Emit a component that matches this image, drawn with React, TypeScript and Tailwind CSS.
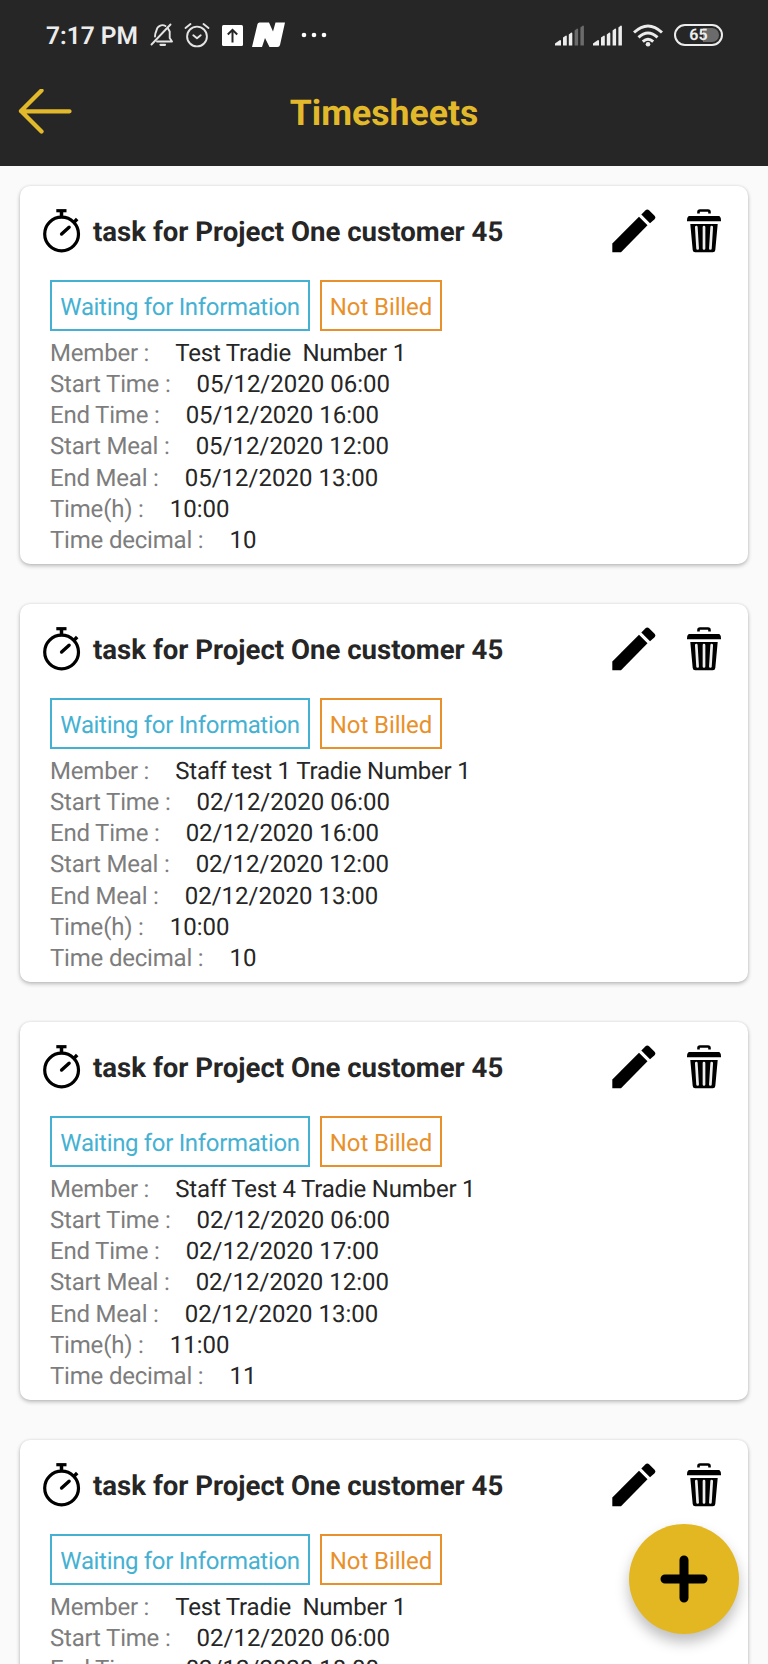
interface Timesheet {
    id: number;
    title: string;
    status: string;
    billing: string;
    member: string;
    startTime: string;
    endTime: string;
    startMeal: string;
    endMeal: string;
    hours: string;
    decimal: string;
}

const timesheets: Timesheet[] = [
    {
        id: 1,
        title: "task for Project One customer 45",
        status: "Waiting for Information",
        billing: "Not Billed",
        member: "Test Tradie  Number 1",
        startTime: "05/12/2020 06:00",
        endTime: "05/12/2020 16:00",
        startMeal: "05/12/2020 12:00",
        endMeal: "05/12/2020 13:00",
        hours: "10:00",
        decimal: "10",
    },
    {
        id: 2,
        title: "task for Project One customer 45",
        status: "Waiting for Information",
        billing: "Not Billed",
        member: "Staff test 1 Tradie Number 1",
        startTime: "02/12/2020 06:00",
        endTime: "02/12/2020 16:00",
        startMeal: "02/12/2020 12:00",
        endMeal: "02/12/2020 13:00",
        hours: "10:00",
        decimal: "10",
    },
    {
        id: 3,
        title: "task for Project One customer 45",
        status: "Waiting for Information",
        billing: "Not Billed",
        member: "Staff Test 4 Tradie Number 1",
        startTime: "02/12/2020 06:00",
        endTime: "02/12/2020 17:00",
        startMeal: "02/12/2020 12:00",
        endMeal: "02/12/2020 13:00",
        hours: "11:00",
        decimal: "11",
    },
    {
        id: 4,
        title: "task for Project One customer 45",
        status: "Waiting for Information",
        billing: "Not Billed",
        member: "Test Tradie  Number 1",
        startTime: "02/12/2020 06:00",
        endTime: "02/12/2020 18:00",
        startMeal: "02/12/2020 12:00",
        endMeal: "02/12/2020 13:00",
        hours: "12:00",
        decimal: "12",
    },
];

function SignalIcon({ level }: { level: number }) {
    const bars = [
        "M0 20.5v-2l5-3.5q1 0 1 1v4.5z",
        "M8 20.5v-8l3-2q.8 0 .8 1v9z",
        "M13.800 20.500v-11l2.500-2q1 0 1 1v12z",
        "M19.600 20.500v-15l2.500-2q1 0 1 1v16z",
        "M25.400 20.500v-18l2.500-2q1 0 1 1v19z",
    ];
    return (
        <svg width="30" height="21" viewBox="0 0 30 21">
            {bars.map((d, i) => (
                <path key={i} d={d} fill={i < level ? "#ececec" : "#6b6b6b"} />
            ))}
        </svg>
    );
}

function StatusBar() {
    return (
        <div className="flex h-[70px] items-center justify-between pl-[46px] pr-[45px]">
            <div className="flex items-center">
                <span className="w-[104px] whitespace-nowrap pt-px text-[24.5px] font-semibold leading-[28px] text-[#ececec]">7:17 PM</span>
                {/* muted bell */}
                <svg width="24" height="24" viewBox="0 0 24 24" fill="none" stroke="#e4e4e4" strokeWidth="1.900" strokeLinecap="round" strokeLinejoin="round">
                    <path d="M7 18.500h15l-2.300-3.500V8.500L18 5.500M15.500 3A6 6 0 0 0 6.500 7.500q-1.500 3-1.500 6" />
                    <path d="M1.500 21.500 20.500 1.500" />
                    <path d="M10.500 21.800h4.500" strokeWidth="2.200" />
                </svg>
                {/* alarm */}
                <svg className="ml-[10px]" width="26" height="26" viewBox="0 0 26 26" fill="none" stroke="#e4e4e4" strokeWidth="1.900" strokeLinecap="round" strokeLinejoin="round">
                    <circle cx="13" cy="14.500" r="9.900" />
                    <path d="m9.300 13.300 3.700 3 3.700-3M1.500 6 6.500 2M24.500 6l-5-4" />
                </svg>
                {/* upload */}
                <svg className="ml-[12px]" width="21" height="21" viewBox="0 0 21 21">
                    <rect width="21" height="21" rx="1.500" fill="#fff" />
                    <path d="M10.500 17.500V5M5.800 9.500l4.700-4.700 4.700 4.700" fill="none" stroke="#262626" strokeWidth="2" />
                </svg>
                {/* news app mark */}
                <svg className="ml-[9px]" width="33" height="26" viewBox="0 0 33 26">
                    <path d="M7.500.5h9.500l4 9 2.500-9H33l-5 22.500q-.5 2-2.500 2h-8l-4.500-9-3 9H0L5.500 2q.5-1.500 2-1.500z" fill="#fff" />
                </svg>
                <svg className="ml-[16px]" width="26" height="6" viewBox="0 0 26 6" fill="#fff">
                    <circle cx="3" cy="3" r="2.300" />
                    <circle cx="13" cy="3" r="2.300" />
                    <circle cx="23" cy="3" r="2.300" />
                </svg>
            </div>
            <div className="flex items-center">
                <SignalIcon level={3} />
                <div className="ml-[8px] flex">
                    <SignalIcon level={5} />
                </div>
                <svg className="ml-[10px]" width="30" height="23" viewBox="0 0 30 23" fill="none" stroke="#ececec" strokeWidth="3">
                    <path d="M1 8.500Q15-4.500 29 8.500M5.500 13.300q9.500-8.600 19 0M9.800 17.600q5.200-4.600 10.400 0" />
                    <circle cx="15" cy="20.300" r="2.300" fill="#ececec" stroke="none" />
                </svg>
                <div className="ml-[11px] flex h-[22px] w-[49px] items-center rounded-full border-2 border-[#ececec] p-[2px]">
                    <div className="flex h-[14px] w-full items-center justify-center rounded-full bg-linear-to-r from-transparent from-60% to-[#6b6b6b] to-60% text-[16px] font-bold leading-none text-[#ececec]">
                        65
                    </div>
                </div>
            </div>
        </div>
    );
}

function Header() {
    return (
        <header className="h-[166px] bg-[#262626]">
            <StatusBar />
            <div className="grid h-[84px] grid-cols-[1fr_auto_1fr] items-center">
                <button className="pl-[18px]" aria-label="Back">
                    <svg width="54" height="46" viewBox="0 0 54 46" fill="none" stroke="#e3b92c" strokeWidth="4.300" strokeLinecap="round" strokeLinejoin="round">
                        <path d="M23.500 1.500 3 22l20.500 20.500M3 22.300h48.500" />
                    </svg>
                </button>
                <h1 className="pt-[2px] text-[35.6px] font-bold leading-[42px] text-[#e3b92c]">Timesheets</h1>
            </div>
        </header>
    );
}

function StopwatchIcon() {
    return (
        <svg width="38" height="45" viewBox="0 0 38 45" fill="none" stroke="#000">
            <circle cx="18.600" cy="26" r="16.900" strokeWidth="3.200" />
            <path d="M13.300 2.700h10.200" strokeWidth="3.200" />
            <path d="M18.500 3v7" strokeWidth="3.500" />
            <path d="m30 15.200 4.200-4.200" strokeWidth="3.500" />
            <path d="m18.600 26 7.500-6.800" strokeWidth="3.400" strokeLinecap="round" />
        </svg>
    );
}

function PencilIcon() {
    return (
        <svg width="44" height="45" viewBox="0 -1 44 45" fill="#000">
            <path d="M.3 34.500 27 7.800l8.500 8.500L9 43.300H.3z" />
            <path d="m29.300 5.500 4-4q2-2 4 0l5 5q2 2 0 4l-4.300 3.800z" />
        </svg>
    );
}

function TrashIcon() {
    return (
        <svg width="34" height="45" viewBox="0 -1 34 45">
            <path d="M11.500 4.500V3q0-1.500 1.500-1.500h8q1.500 0 1.500 1.500v1.500" fill="none" stroke="#000" strokeWidth="2.600" />
            <path d="M2.500 7h29q2.500 0 2.500 4.500v.8H0v-.8Q0 7 2.500 7z" />
            <path d="M3.300 15h27.400l-2.400 26q-.2 2.300-2.500 2.300H8.200q-2.300 0-2.500-2.300z" />
            <path d="m9.300 18 1.300 21.500M17 18v21.500M24.700 18l-1.300 21.500" fill="none" stroke="#eee" strokeWidth="2.700" strokeLinecap="round" />
        </svg>
    );
}

function TimesheetCard({ sheet }: { sheet: Timesheet }) {
    const rows = [
        ["Start Time :", sheet.startTime],
        ["End Time :", sheet.endTime],
        ["Start Meal :", sheet.startMeal],
        ["End Meal :", sheet.endMeal],
        ["Time(h) :", sheet.hours],
        ["Time decimal :", sheet.decimal],
    ];

    return (
        <article className="h-[378px] shrink-0 rounded-[10px] bg-white shadow-[0_2px_4px_rgba(0,0,0,0.24),0_0_3px_rgba(0,0,0,0.1)]">
            <div className="flex h-[94px] items-start pl-[23px] pr-[27px] pt-[22px]">
                <StopwatchIcon />
                <h2 className="ml-[12px] mt-[8px] flex-1 whitespace-nowrap text-[27.6px] font-bold leading-[32px] text-[#262626]">{sheet.title}</h2>
                <button aria-label="Edit">
                    <PencilIcon />
                </button>
                <button className="ml-[31px]" aria-label="Delete">
                    <TrashIcon />
                </button>
            </div>
            <div className="flex gap-[10px] pl-[30px] text-[24px] leading-[44px]">
                <span className="w-[260px] whitespace-nowrap border-2 border-[#45b1d2] pt-[3px] text-center tracking-[-0.33px] text-[#45b1d2]">{sheet.status}</span>
                <span className="w-[122px] whitespace-nowrap border-2 border-[#e8912c] pt-[3px] text-center tracking-[-0.1px] text-[#e8912c]">{sheet.billing}</span>
            </div>
            <div className="pl-[30px] pt-[6.500px] text-[24px] leading-[31.25px]">
                <div className="flex gap-[26px] whitespace-pre tracking-[-0.2px]">
                    <span className="text-[#7d7d7d]">Member :</span>
                    <span className="text-[#262626]">{sheet.member}</span>
                </div>
                {rows.map(([label, value]) => (
                    <div key={label} className="flex gap-[26px] whitespace-pre">
                        <span className="tracking-[-0.2px] text-[#7d7d7d]">{label}</span>
                        <span className="text-[#262626]">{value}</span>
                    </div>
                ))}
            </div>
        </article>
    );
}

export default function App() {
    return (
        <div className="relative flex h-[1664px] w-[768px] flex-col overflow-hidden bg-[#fafafa] font-[Roboto,sans-serif] [text-rendering:geometricPrecision]">
            <Header />
            <main className="flex min-h-0 flex-1 flex-col gap-[40px] overflow-hidden px-[20px] pt-[20px]">
                {timesheets.map((sheet) => (
                    <TimesheetCard key={sheet.id} sheet={sheet} />
                ))}
            </main>

            {/* Floating add button */}
            <button
                className="absolute bottom-[30px] right-[29px] flex size-[110px] items-center justify-center rounded-full bg-[#e3b722] shadow-[0_8px_14px_rgba(0,0,0,0.26)]"
                aria-label="Add timesheet"
            >
                <svg width="48" height="48" viewBox="0 0 48 48" stroke="#000" strokeWidth="9" strokeLinecap="round">
                    <path d="M24 5v38M5 24h38" />
                </svg>
            </button>
        </div>
    );
}
